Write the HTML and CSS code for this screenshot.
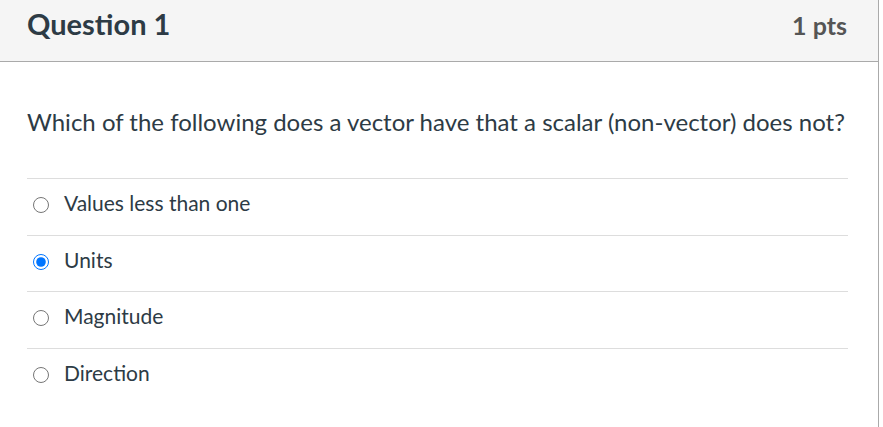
FILE: index.html
```html
<!DOCTYPE html>
<html>
<head>
<meta charset="utf-8">
<link rel="stylesheet" href="styles.css">
</head>
<body>
<div class="quiz">
  <div class="header">
    <h2 class="title">Question 1</h2>
    <span class="pts">1 pts</span>
  </div>
  <div class="content">
    <p class="question">Which of the following does a vector have that a scalar (non-vector) does not?</p>
    <div class="answers">
      <label class="answer"><input type="radio" name="q1"><span>Values less than one</span></label>
      <label class="answer"><input type="radio" name="q1" checked><span>Units</span></label>
      <label class="answer"><input type="radio" name="q1"><span>Magnitude</span></label>
      <label class="answer"><input type="radio" name="q1"><span>Direction</span></label>
    </div>
  </div>
</div>
</body>
</html>
```
FILE: styles.css
```css
html, body {
  margin: 0;
  padding: 0;
  background: #fff;
}
body {
  font-family: Lato, "Liberation Sans", sans-serif;
  color: #2d3b45;
}
.quiz {
  width: 878px;
  height: 427px;
  border-right: 1px solid #aaaaaa;
}
.header {
  height: 62px;
  box-sizing: border-box;
  background: #f5f5f5;
  border-bottom: 1px solid #aaaaaa;
  display: flex;
  align-items: baseline;
  justify-content: space-between;
  padding: 7px 31px 0 27px;
}
.title {
  margin: 0;
  font-size: 29px;
  font-weight: 700;
  line-height: 1.2;
  color: #2d3b45;
}
.pts {
  font-size: 25px;
  font-weight: 700;
  color: #555555;
}
.content {
  padding: 0 30px 0 27px;
}
.question {
  margin: 44px 0 40px;
  font-size: 24px;
  line-height: 32px;
}
.answers {
  display: flex;
  flex-direction: column;
}
.answer {
  display: flex;
  align-items: flex-start;
  padding-top: 11px;
  box-sizing: border-box;
  height: 56.67px;
  border-top: 1px solid #dddddd;
  font-size: 21px;
  line-height: 1.2;
}
.answer input {
  margin: 7px 15px 0 6px;
  width: 16px;
  height: 16px;
  flex: none;
}
```
